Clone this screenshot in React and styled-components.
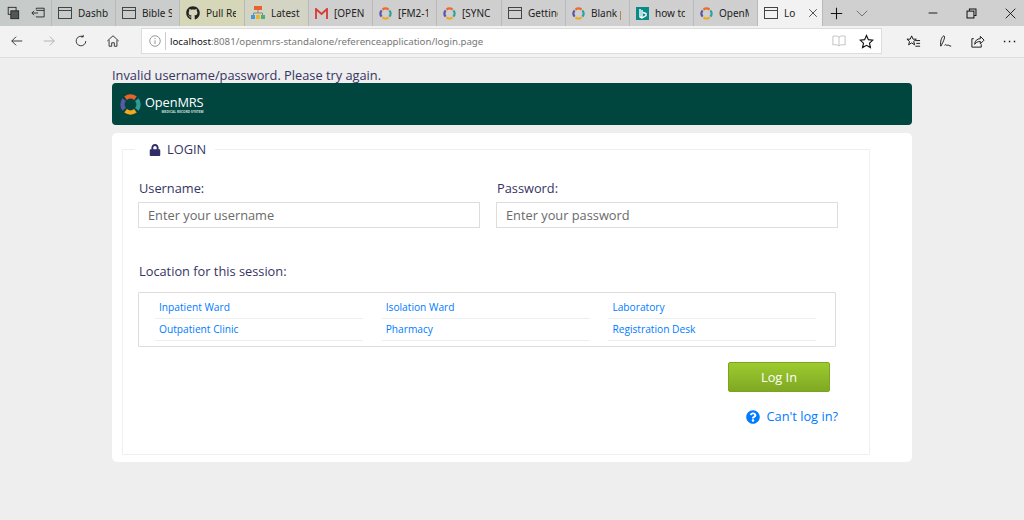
import React from 'react';
import styled, { createGlobalStyle } from 'styled-components';
import { FaGithub, FaLock, FaQuestionCircle } from 'react-icons/fa';

const Global = createGlobalStyle`
  html, body { margin: 0; padding: 0; width: 1024px; height: 520px; overflow: hidden; background: #eeeeee; }
  * { box-sizing: border-box; }
  body { font-family: "Open Sans", "Noto Sans", sans-serif; color: #363463; }
`;

const TabStrip = styled.div`
  display: flex; height: 26px; background: linear-gradient(90deg, #c6cbca 0%, #cfcfcf 30%, #d0d0d0 100%);
  font-family: "Noto Sans", "Open Sans", sans-serif; font-size: 10px; color: #222;
`;
const Leading = styled.div`
  width: 51px; display: flex; align-items: center; padding-left: 6px; gap: 11px;
`;
const Tab = styled.div`
  width: ${p => p.$w || 64}px; height: 26px; display: flex; align-items: center; flex-shrink: 0;
  padding-left: 6px; gap: 6px; overflow: hidden; white-space: nowrap;
  border-left: 1px solid #b9b9b9;
  background: ${p => p.$active ? '#f2f2f2' : p.$tint || 'transparent'};
`;
const TabText = styled.span`
  display: block; width: ${p => p.$w || 30}px; overflow: hidden;
`;
const CloseSlot = styled.span`
  display: flex; margin-left: 3px;
`;
const StripControls = styled.div`
  flex: 1; display: flex; align-items: center; border-left: 1px solid #b9b9b9;
`;
const NewTabGroup = styled.div`
  display: flex; align-items: center; gap: 13px; padding-left: 7px; width: 100px;
`;
const WindowButtons = styled.div`
  display: flex; align-items: center; margin-left: auto; padding-right: 8px; gap: 28px;
`;
const Toolbar = styled.div`
  height: 32px; background: #f2f2f2; display: flex; align-items: center; border-bottom: 1px solid #dedede;
  padding-bottom: 1px;
`;
const NavGroup = styled.div`
  width: 141px; flex-shrink: 0; display: flex; align-items: center; padding-left: 10px; gap: 18px;
`;
const AddressBar = styled.div`
  width: 741px; height: 26px; background: #fff; border: 1px solid #dcdcdc; display: flex; align-items: center;
  padding: 0 7px; font-family: "Noto Sans", sans-serif; font-size: 9.7px; color: #777;
`;
const InfoDivider = styled.span`
  width: 1px; height: 18px; background: #ccc; margin: 0 4px 0 4px;
`;
const Host = styled.span`color: #111;`;
const AddressActions = styled.div`
  margin-left: auto; display: flex; align-items: center; gap: 13px;
`;
const ToolActions = styled.div`
  flex: 1; display: flex; align-items: center; padding-left: 24px; gap: 17px;
`;
const Page = styled.main`
  width: 800px; margin-left: 112px; padding-top: 9px;
`;
const ErrorMessage = styled.div`
  font-size: 12.8px; line-height: 16px; height: 16px; color: #363463;
`;
const Banner = styled.header`
  height: 42px; background: #00463f; border-radius: 4px; display: flex; align-items: center; padding-left: 8px; gap: 4px;
`;
const Brand = styled.div`
  color: #fff; display: flex; flex-direction: column; align-items: flex-end;
`;
const BrandName = styled.span`
  font-size: 12.8px; line-height: 15px; letter-spacing: -0.1px; margin-top: 1px;
`;
const BrandSub = styled.span`
  font-size: 3.2px; line-height: 4px; font-weight: 700; color: #cfe0dc; letter-spacing: 0.05px;
`;
const Card = styled.section`
  margin-top: 8px; height: 329px; background: #fff; border-radius: 5px; padding: 7px 42px 7px 10px;
`;
const Fieldset = styled.fieldset`
  margin: 0; height: 100%; border: 1px solid #efefef; padding: 0 0 0 15px; min-width: 0; display: block;
`;
const Legend = styled.legend`
  margin-left: -3px; padding: 0 9px 0 14px; font-size: 12.8px; line-height: 19px; color: #363463;
  display: flex; align-items: center; gap: 6px;
`;
const FieldRow = styled.div`
  display: flex; gap: 16px; margin-top: 20px;
`;
const Field = styled.div`
  width: ${p => p.$w}px;
`;
const Label = styled.label`
  display: block; font-size: 12.8px; line-height: 19px; margin-bottom: 4px; padding-left: 1px; color: #363463;
`;
const Input = styled.input`
  display: block; width: 100%; height: 26px; border: 1px solid #dddddd; background: #fff; padding: 0 9px;
  font: 12.8px "Open Sans", sans-serif; color: #555; outline: none;
  &::placeholder { color: #6a6a6a; opacity: 1; }
`;
const SessionLabel = styled(Label)`
  margin: 34px 0 11px;
`;
const LocationBox = styled.ul`
  list-style: none; margin: 0; padding: 4px 18px 0 16px; width: 698px; height: 55px; border: 1px solid #dcdcdc;
  display: grid; grid-template-columns: repeat(3, 208px); column-gap: 18.7px; grid-auto-rows: 22px;
  border-radius: 1px;
`;
const LocationItem = styled.li`
  border-bottom: 1px solid #eeeeee; padding-left: 4px; font-size: 10.2px; line-height: 20px; color: #007bff;
`;
const Actions = styled.div`
  width: 692px; display: flex; justify-content: flex-end; margin-top: 15px;
`;
const LoginButton = styled.button`
  width: 102px; height: 30px; border: 1px solid #7ba41f; border-radius: 2px; color: #fff;
  background: linear-gradient(#9ccb2e, #80a824); font: 12.8px "Open Sans", sans-serif; padding: 0;
`;
const HelpRow = styled.div`
  width: 700px; margin-top: 15px; display: flex; justify-content: flex-end; align-items: center; gap: 6px;
  font-size: 12.8px; line-height: 19px; color: #007bff;
`;
const PageIcon = () => (
  <svg width="14" height="12" viewBox="0 0 14 12" fill="none" stroke="#444"><rect x=".5" y=".5" width="13" height="11"/><path d="M.5 3.500h13"/></svg>
);
const Ring = () => (
  <svg width="13" height="13" viewBox="0 0 13 13" fill="none" strokeWidth="2.200">
    <path d="M3.400 2.600A5 5 0 0 1 9.600 2.600" stroke="#f0682a"/>
    <path d="M10.400 3.400A5 5 0 0 1 10.400 9.600" stroke="#2ba4a0"/>
    <path d="M9.600 10.400A5 5 0 0 1 3.400 10.400" stroke="#f5a81c"/>
    <path d="M2.600 9.600A5 5 0 0 1 2.600 3.400" stroke="#5a55a5"/>
  </svg>
);
const BigLogo = () => (
  <svg width="21" height="21" viewBox="0 0 21 21" fill="none" strokeWidth="4.400">
    <path d="M5.600 4.200A8 8 0 0 1 15.400 4.200" stroke="#e8622a"/>
    <path d="M16.800 5.600A8 8 0 0 1 16.800 15.400" stroke="#2f9b96"/>
    <path d="M15.400 16.800A8 8 0 0 1 5.600 16.800" stroke="#f4a81d"/>
    <path d="M4.200 15.400A8 8 0 0 1 4.200 5.600" stroke="#5d57a6"/>
  </svg>
);
const Gmail = () => (
  <svg width="13" height="11" viewBox="0 0 13 11" fill="none"><path d="M1 11V1l5.500 5L12 1v10" stroke="#d93a30" strokeWidth="1.800"/></svg>
);
const Org = () => (
  <svg width="14" height="14" viewBox="0 0 14 14">
    <rect x="3" y="0" width="8" height="4" fill="#e8632c"/>
    <path d="M7 4v3M2.500 9V7h9v2" stroke="#888" fill="none"/>
    <rect x="0" y="9" width="4" height="4" fill="#3c9adf"/>
    <rect x="5" y="9" width="4" height="4" fill="#f0b429"/>
    <rect x="10" y="9" width="4" height="4" fill="#4bb071"/>
  </svg>
);
const Bing = () => (
  <svg width="13" height="13" viewBox="0 0 13 13"><rect width="13" height="13" fill="#078a88"/><path d="M4 2v8l2 1 4-2.300V6.500L7 5.500M6 3v7" stroke="#fff" strokeWidth="1.400" fill="none"/></svg>
);
const Stroke = ({ w = 16, h = 16, color = '#222', children }) => (
  <svg width={w} height={h} viewBox="0 0 16 16" fill="none" stroke={color} strokeWidth="1">{children}</svg>
);

const tabs = [
  { icon: <PageIcon />, text: 'Dashb', w: 64 },
  { icon: <PageIcon />, text: 'Bible S', w: 64 },
  { icon: <FaGithub size={14} color="#222" />, text: 'Pull Re', w: 65, tint: '#d6d7b8' },
  { icon: <Org />, text: 'Latest', w: 64, tint: '#d4d4c4' },
  { icon: <Gmail />, text: '[OPEN', w: 64 },
  { icon: <Ring />, text: '[FM2-1', w: 64 },
  { icon: <Ring />, text: '[SYNC', w: 65 },
  { icon: <PageIcon />, text: 'Getting', w: 64 },
  { icon: <Ring />, text: 'Blank p', w: 64 },
  { icon: <Bing />, text: 'how to', w: 64 },
  { icon: <Ring />, text: 'OpenM', w: 64 },
];
const locations = ['Inpatient Ward', 'Isolation Ward', 'Laboratory', 'Outpatient Clinic', 'Pharmacy', 'Registration Desk'];

export default function App() {
  return (
    <>
      <Global />
      <TabStrip>
        <Leading>
          <Stroke w={14} h={14}><rect x="2.500" y="1.500" width="9" height="8"/><rect x="5.500" y="5.500" width="9" height="9" fill="#555"/></Stroke>
          <Stroke w={14} h={14}><path d="M1 8h7M3.500 5.500L1 8l2.500 2.500M6 4V2.500h9v10H6V12M6 5h9"/></Stroke>
        </Leading>
        {tabs.map(t => (
          <Tab key={t.text} $w={t.w} $tint={t.tint}>
            {t.icon}
            <TabText $w={30}>{t.text}</TabText>
          </Tab>
        ))}
        <Tab $active $w={65}>
          <PageIcon />
          <TabText $w={14}>Lo</TabText>
          <CloseSlot><Stroke w={12} h={12}><path d="M3 3l10 10M13 3L3 13"/></Stroke></CloseSlot>
        </Tab>
        <StripControls>
          <NewTabGroup>
            <Stroke w={13} h={13} color="#111"><path d="M8 1v14M1 8h14" strokeWidth="1.300"/></Stroke>
            <Stroke w={12} h={12} color="#555"><path d="M1 5l7 7 7-7"/></Stroke>
          </NewTabGroup>
          <WindowButtons>
            <Stroke w={10} h={10} color="#111"><path d="M1 8h14" strokeWidth="1.500"/></Stroke>
            <Stroke w={11} h={11} color="#111"><rect x="1.500" y="4.500" width="10" height="10" strokeWidth="1.500"/><path d="M5 4V1.500h9.500V11H12" strokeWidth="1.500"/></Stroke>
            <Stroke w={11} h={11} color="#111"><path d="M1 1l14 14M15 1L1 15" strokeWidth="1.300"/></Stroke>
          </WindowButtons>
        </StripControls>
      </TabStrip>
      <Toolbar>
        <NavGroup>
          <Stroke w={14} h={14}><path d="M14 8H2M7 3L2 8l5 5"/></Stroke>
          <Stroke w={14} h={14} color="#aaa"><path d="M2 8h12M9 3l5 5-5 5"/></Stroke>
          <Stroke w={14} h={14}><path d="M13.500 8a5.500 5.500 0 1 1-3-4.900M10.500 1v2.300H8"/></Stroke>
          <Stroke w={14} h={14}><path d="M1.500 8L8 2l6.500 6M3.500 7v7h3v-4h3v4h3V7"/></Stroke>
        </NavGroup>
        <AddressBar>
          <Stroke w={12} h={12} color="#777"><circle cx="8" cy="8" r="7"/><path d="M8 7v5M8 4v1.500"/></Stroke>
          <InfoDivider />
          <Host>localhost</Host>:8081/openmrs-standalone/referenceapplication/login.page
          <AddressActions>
            <Stroke w={14} h={14} color="#bbb"><path d="M8 3.500C6 2 3 2 1 2.500v10c2-.5 5-.5 7 1 2-1.500 5-1.500 7-1v-10C13 2 10 2 8 3.500zM8 3.500v10"/></Stroke>
            <Stroke w={15} h={15} color="#111"><path d="M8 1.500l2 4.500 4.800.5-3.600 3.200 1 4.800L8 12.100l-4.200 2.400 1-4.800L1.200 6.500 6 6z" strokeWidth="1.200"/></Stroke>
          </AddressActions>
        </AddressBar>
        <ToolActions>
          <Stroke w={15} h={15} color="#111"><path d="M6 2l1.500 3.500H11L8.200 8l1 3.500L6 9.500 2.800 11.500l1-3.500L1 5.500h3.500zM10 7h5M11 10h4M10 13h5"/></Stroke>
          <Stroke w={15} h={15} color="#111"><path d="M3 13C2 8 4 3 6 2c2 0 1 4-3 11zM7 12c1-2 2 1 3 0s2 1 4 1"/></Stroke>
          <Stroke w={15} h={15} color="#111"><path d="M4 5H2v9h10v-3M5 11c0-4 3-6 6-6V2.500l4 4-4 4V8c-3 0-5 1-6 3z"/></Stroke>
          <Stroke w={15} h={15} color="#111"><path d="M2 8h1.500M7.300 8h1.500M12.600 8h1.500" strokeWidth="1.600"/></Stroke>
        </ToolActions>
      </Toolbar>
      <Page>
        <ErrorMessage>Invalid username/password. Please try again.</ErrorMessage>
        <Banner>
          <BigLogo />
          <Brand>
            <BrandName>OpenMRS</BrandName>
            <BrandSub>MEDICAL RECORD SYSTEM</BrandSub>
          </Brand>
        </Banner>
        <Card>
          <Fieldset>
            <Legend><FaLock size={12} color="#2f2c66" /> LOGIN</Legend>
            <FieldRow>
              <Field $w={342}>
                <Label>Username:</Label>
                <Input placeholder="Enter your username" />
              </Field>
              <Field $w={342}>
                <Label>Password:</Label>
                <Input placeholder="Enter your password" />
              </Field>
            </FieldRow>
            <SessionLabel>Location for this session:</SessionLabel>
            <LocationBox>
              {locations.map(l => <LocationItem key={l}>{l}</LocationItem>)}
            </LocationBox>
            <Actions><LoginButton>Log In</LoginButton></Actions>
            <HelpRow><FaQuestionCircle size={14} color="#007bff" /> Can't log in?</HelpRow>
          </Fieldset>
        </Card>
      </Page>
    </>
  );
}
